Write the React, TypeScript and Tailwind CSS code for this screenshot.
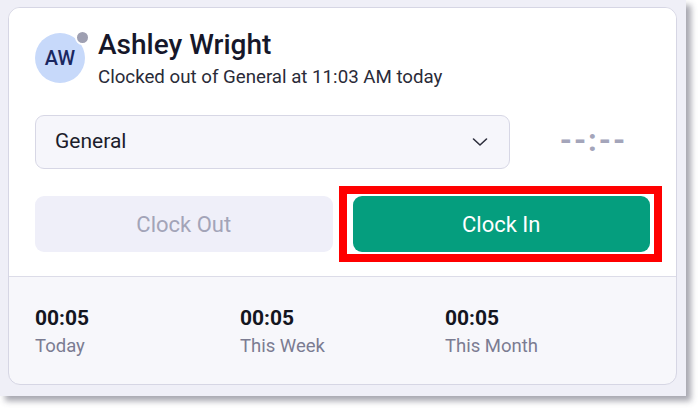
export default function App() {
  const stats = [
    { value: "00:05", label: "Today" },
    { value: "00:05", label: "This Week" },
    { value: "00:05", label: "This Month" },
  ];

  return (
    <div className="w-[700px] h-[410px] bg-white font-['Roboto',sans-serif]">
      <div className="w-[686px] h-[396px] bg-[#efeff7] pl-[8px] pt-[7px] shadow-[5px_5px_6px_rgba(60,60,80,0.45)]">
        <div className="w-[669px] h-[378px] bg-[#f7f7fb] border border-[#d6d6e4] rounded-[12px] overflow-hidden flex flex-col">
          {/* top: user + controls */}
          <div className="bg-white px-[26px] pt-[21px] pb-[24px] border-b border-[#dcdce8]">
            <div className="flex items-center">
              <div className="relative w-[50px] h-[50px] shrink-0 -mt-[3px]">
                <div className="w-full h-full rounded-full bg-[#c7d9fa] flex items-center justify-center text-[20px] font-medium text-[#1a2760]">
                  AW
                </div>
                <span className="absolute -top-[3px] -right-[5px] w-[15px] h-[15px] rounded-full bg-[#9e9fb1] border-2 border-white" />
              </div>
              <div className="ml-[13px]">
                <div className="text-[28px] leading-[32px] font-medium text-[#16172a]">Ashley Wright</div>
                <div className="text-[18.7px] leading-[24px] text-[#2a2b38] mt-[4px]">
                  Clocked out of General at 11:03 AM today
                </div>
              </div>
            </div>

            <div className="flex items-center mt-[26px]">
              <div className="w-[475px] h-[54px] rounded-[9px] bg-[#f6f6fb] border border-[#d7d7e5] flex items-center justify-between pl-[19px] pr-[21px]">
                <span className="text-[21px] text-[#1c1d2b]">General</span>
                <svg width="16" height="10" viewBox="0 0 16 10" fill="none">
                  <path d="M1.5 2 L8 8 L14.5 2" stroke="#2e2f3d" strokeWidth="1.6" strokeLinecap="round" strokeLinejoin="round" />
                </svg>
              </div>
              <div className="flex-1 flex justify-center pl-[27px] text-[31px] leading-none font-bold tracking-[2px] text-[#a4a5ba] -mt-[4px]">
                --:--
              </div>
            </div>

            <div className="grid grid-cols-2 gap-[20px] mt-[27px]">
              <button className="h-[56px] rounded-[9px] bg-[#efeff9] text-[22px] text-[#a3a4b8]">
                Clock Out
              </button>
              <div className="relative">
                <div className="absolute -top-[10px] -bottom-[10px] -left-[14px] -right-[12px] border-[8px] border-[#ff0000]" />
                <button className="relative w-full h-[56px] rounded-[9px] bg-[#059e7e] text-[22px] text-white">
                  Clock In
                </button>
              </div>
            </div>
          </div>

          {/* bottom: totals */}
          <div className="grid grid-cols-3 px-[26px] pt-[28px]">
            {stats.map((s) => (
              <div key={s.label}>
                <div className="text-[21px] leading-[26px] font-bold text-[#14151f]">{s.value}</div>
                <div className="text-[18.5px] leading-[24px] text-[#7b7c92] mt-[3px]">{s.label}</div>
              </div>
            ))}
          </div>
        </div>
      </div>
    </div>
  );
}
